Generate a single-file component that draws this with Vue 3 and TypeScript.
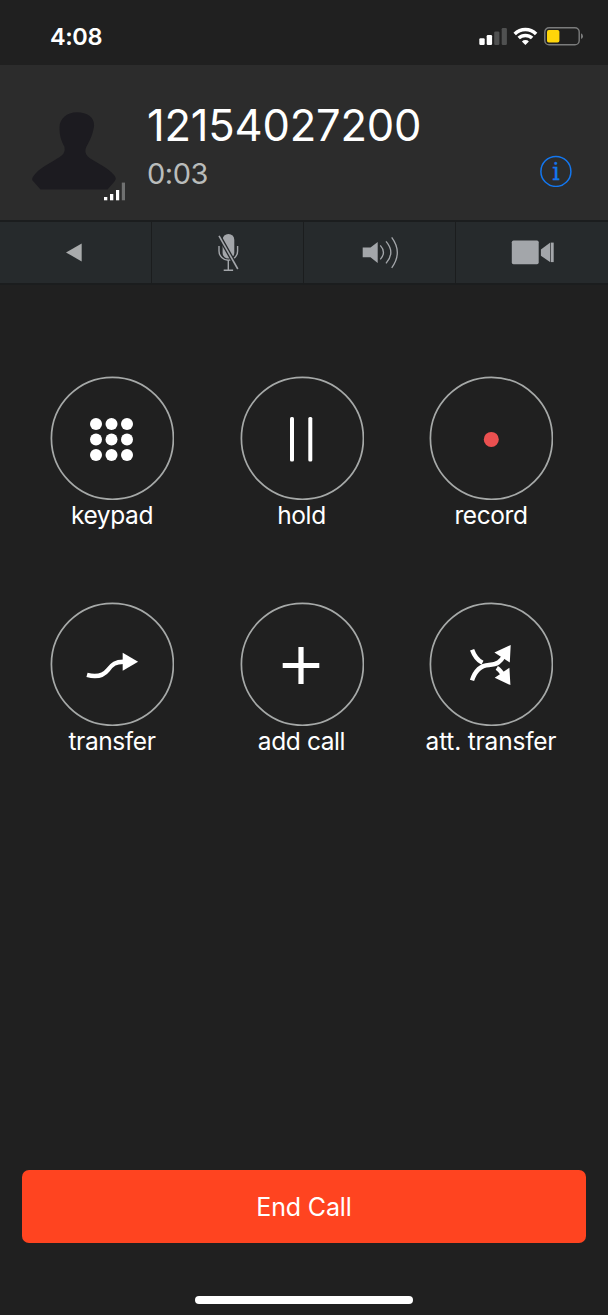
<script setup lang="ts">
interface Action {
  id: string
  label: string
}

const phoneNumber = '12154027200'
const duration = '0:03'
const tools: string[] = ['back', 'mute', 'speaker', 'video']
const actions: Action[] = [
  { id: 'keypad', label: 'keypad' },
  { id: 'hold', label: 'hold' },
  { id: 'record', label: 'record' },
  { id: 'transfer', label: 'transfer' },
  { id: 'add', label: 'add call' },
  { id: 'attended', label: 'att. transfer' },
]
const dots: number[] = [45.5, 61, 76.5]
</script>

<template>
  <div class="screen">
    <div class="status">
      <span class="clock">4:08</span>
      <svg class="indicators" width="106" height="20" viewBox="0 0 106 20">
        <g fill="#fff">
          <rect x="1.3" y="11.2" width="5.4" height="6.8" rx="1.2" />
          <rect x="8.7" y="8" width="5.4" height="10" rx="1.2" />
        </g>
        <g fill="#505151">
          <rect x="16.2" y="4.6" width="5.2" height="13.4" rx="1.2" />
          <rect x="23.7" y="1" width="5.2" height="17" rx="1.2" />
        </g>
        <g fill="none" stroke="#fff" stroke-width="3.5">
          <path d="M36.7 6.9a15.2 15.2 0 0 1 21.4 0" />
          <path d="M40.7 11.1a9.7 9.7 0 0 1 13.4 0" />
        </g>
        <path d="M43.9 14.4a5.1 5.1 0 0 1 7 0l-3.5 3.6z" fill="#fff" />
        <rect x="66.8" y=".8" width="34.4" height="16.9" rx="4.3" fill="none" stroke="#7b7c7c" stroke-width="1.4" />
        <rect x="69" y="3" width="12.4" height="12.6" rx="1.8" fill="#ffd60a" />
        <path d="M103 6.3q2 1 2 2.9t-2 2.9z" fill="#7b7c7c" />
      </svg>
    </div>

    <header class="caller">
      <svg class="avatar" width="100" height="94" viewBox="0 0 100 94">
        <path
          d="M45 5.3C34.5 5.3 27.5 12 27.5 20.5C27.5 29 29 33 32.3 39.5C34 46 29.5 49 26 51C18 56.5 7 61 1.5 69C-.5 72 0 73 1.5 74.5L8.5 82.5H75.5L82.5 74.5C84.5 72 84 70.5 82 68C76.5 61 66 56.5 57.5 51C53 47.5 52.5 44 54.5 39.5C58.5 32.5 60.5 28 62 19.5C63 11 56 5.3 45 5.3Z"
          fill="#1c1b20"
        />
        <g fill="#fff">
          <rect x="72" y="90" width="3.3" height="3.3" />
          <rect x="78" y="87" width="3.3" height="6.3" />
          <rect x="84" y="83" width="3.2" height="10.3" />
        </g>
        <rect x="89.8" y="75.6" width="3.2" height="17.7" fill="#707171" />
      </svg>
      <div class="details">
        <div class="number">{{ phoneNumber }}</div>
        <div class="duration">{{ duration }}</div>
      </div>
      <svg class="info" width="32" height="32" viewBox="0 0 32 32">
        <circle cx="15.9" cy="16.4" r="15" fill="none" stroke="#1377f0" stroke-width="1.5" />
        <text x="16" y="25.2" text-anchor="middle" class="info-letter">i</text>
      </svg>
    </header>

    <nav class="tools">
      <button v-for="tool in tools" :key="tool" class="tool" type="button" :aria-label="tool">
        <svg v-if="tool === 'back'" width="50" height="40" viewBox="0 0 50 40">
          <path d="M15 20.4L30.7 11.4V29.4Z" fill="#a9abac" />
        </svg>
        <svg v-else-if="tool === 'mute'" width="50" height="40" viewBox="0 0 50 40">
          <rect x="19.6" y="1.9" width="11.7" height="24.7" rx="5.8" fill="#a3a6aa" />
          <g fill="none" stroke="#a3a6aa" stroke-width="1.4">
            <path d="M16 13.9v5a9.3 9.3 0 0 0 18.600 0v-5" />
            <path d="M25.300 28.200v9.500M20.700 38.200h9.400" />
          </g>
          <path d="M16 3.8L34.8 37" stroke="#262a2c" stroke-width="4.2" />
          <path d="M16 3.8L34.8 37" stroke="#a3a6aa" stroke-width="1.6" />
        </svg>
        <svg v-else-if="tool === 'speaker'" width="50" height="40" viewBox="0 0 50 40">
          <path d="M7.7 15.400H15.500L22.700 9.900V30.900L15.500 25.200H7.700Z" fill="#a3a6aa" />
          <g fill="none" stroke="#a3a6aa" stroke-width="1.3">
            <path d="M25.3 13.4q6.3 7 0 14" />
            <path d="M31 9.4q9.6 11 0 22" />
            <path d="M36.7 5.4q11.2 15.2 0 30.4" />
          </g>
        </svg>
        <svg v-else width="50" height="40" viewBox="0 0 50 40">
          <rect x="4.8" y="8.6" width="26.9" height="23.7" rx="1.7" fill="#a3a6aa" />
          <path d="M33.9 17.5L43 10.8V30L33.9 23.8Z" fill="#a3a6aa" />
          <path d="M43.7 10.6h3v19.500h-3z" fill="#a3a6aa" />
        </svg>
      </button>
    </nav>

    <main class="actions">
      <button v-for="action in actions" :key="action.id" class="action" type="button">
        <svg width="124" height="124" viewBox="-0.5 -0.5 124 124">
          <circle cx="61.9" cy="61.8" r="61" fill="none" stroke="#a6a9a8" stroke-width="1.7" />
          <g v-if="action.id === 'keypad'" fill="#fff">
            <template v-for="y in dots" :key="y">
              <circle v-for="x in dots" :key="x" :cx="x" :cy="y + 2" r="6" />
            </template>
          </g>
          <g v-else-if="action.id === 'hold'" fill="#fff">
            <rect x="49.5" y="40.4" width="4" height="44.6" rx="1.5" />
            <rect x="67.8" y="40.4" width="4" height="44.6" rx="1.5" />
          </g>
          <circle v-else-if="action.id === 'record'" cx="61.8" cy="62.9" r="7.5" fill="#eb5050" />
          <g v-else-if="action.id === 'transfer'">
            <path d="M36.5 72.4C45 74.7 52 74.3 57.5 67.3C62 61.5 65 59.3 73 59.3" class="stroke" />
            <path d="M72.2 50.2L87.6 59.2L72.2 68.2Z" fill="#fff" />
          </g>
          <path v-else-if="action.id === 'add'" d="M42.2 63H78.8M60.5 44.5V81.5" stroke="#fff" stroke-width="5.2" />
          <g v-else>
            <path d="M42.6 47.2C44.5 52.5 47.5 57.5 53 60.3" class="stroke" />
            <path d="M42.5 77.9C45.5 68.5 50.5 63 59.5 62.5C68 62 71 59.5 75 52.5" class="stroke" />
            <path d="M67.3 65.3Q71 67.5 74 73" class="stroke" />
            <path d="M81.2 42.4L64.9 49.9L80.3 59.9ZM80.9 82.6L65.2 75.2L79.9 65.2Z" fill="#fff" />
          </g>
        </svg>
        <span class="label">{{ action.label }}</span>
      </button>
    </main>

    <footer class="footer">
      <button class="end" type="button">End Call</button>
      <div class="home"></div>
    </footer>
  </div>
</template>

<style>
html,
body {
  margin: 0;
  background: #202020;
}
</style>

<style scoped>
.screen {
  box-sizing: border-box;
  width: 608px;
  height: 1315px;
  display: flex;
  flex-direction: column;
  overflow: hidden;
  background: #202020;
  color: #fff;
  font-family: Inter, 'Liberation Sans', sans-serif;
}
svg {
  display: block;
  flex: none;
}
button {
  margin: 0;
  padding: 0;
  border: 0;
  background: none;
  color: inherit;
  font: inherit;
}
.status {
  box-sizing: border-box;
  height: 65px;
  flex: none;
  display: flex;
  justify-content: space-between;
  align-items: flex-start;
  padding: 27px 24px 0 50px;
}
.clock {
  font-size: 23.5px;
  line-height: 20px;
  font-weight: 600;
  letter-spacing: -0.4px;
}
.caller {
  box-sizing: border-box;
  height: 155px;
  flex: none;
  display: flex;
  align-items: flex-start;
  padding: 42px 36px 0 32px;
  background: #2c2c2c;
}
.details {
  flex: 1;
  margin-left: 15px;
}
.number {
  height: 38px;
  font-size: 43.5px;
  line-height: 37px;
  letter-spacing: -0.2px;
}
.duration {
  margin-top: 14px;
  font-size: 29px;
  line-height: 30px;
  letter-spacing: -0.5px;
  color: #b9bcbb;
}
.info {
  margin-top: 48px;
}
.info-letter {
  font-family: 'DejaVu Serif', serif;
  font-size: 23.5px;
  fill: #1377f0;
  stroke: #1377f0;
  stroke-width: 0.3px;
}
.tools {
  box-sizing: border-box;
  height: 65px;
  flex: none;
  display: grid;
  grid-template-columns: repeat(4, 1fr);
  border-top: 2px solid #1b1d1e;
  border-bottom: 2px solid #1b1d1e;
  background: #262a2c;
}
.tool {
  display: flex;
  align-items: center;
  justify-content: center;
  padding-bottom: 1px;
  border-right: 1.5px solid #1b1d1e;
}
.tool:last-child {
  border-right: 0;
}
.actions {
  flex: 1;
  display: grid;
  grid-template-columns: repeat(3, 124px);
  grid-auto-rows: 160px;
  column-gap: 65.5px;
  row-gap: 66px;
  align-content: start;
  padding: 91px 0 0 50px;
}
.action {
  display: flex;
  flex-direction: column;
  align-items: center;
}
.label {
  font-size: 24.5px;
  line-height: 31px;
  letter-spacing: -0.4px;
  white-space: nowrap;
}
.action:last-child .label {
  letter-spacing: -0.2px;
}
.footer {
  flex: none;
  display: flex;
  flex-direction: column;
  align-items: center;
  padding: 0 22px 11.5px;
}
.end {
  width: 100%;
  height: 73.5px;
  padding-top: 2px;
  border-radius: 7px;
  background: #ff4420;
  font-size: 25px;
  letter-spacing: -0.15px;
}
.home {
  width: 218px;
  height: 8px;
  margin-top: 52.5px;
  border-radius: 4px;
  background: #fff;
}
.stroke {
  fill: none;
  stroke: #fff;
  stroke-width: 4.4px;
}
</style>
